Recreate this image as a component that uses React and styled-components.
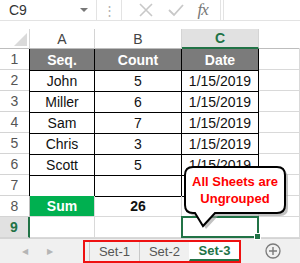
import React from "react";
import styled, { createGlobalStyle } from "styled-components";

const GlobalStyle = createGlobalStyle`
  html, body {
    margin: 0;
    padding: 0;
    background: #ffffff;
    font-family: "Liberation Sans", Arial, sans-serif;
  }
`;

const COLS = "30px 65px 87px 77px 41px";
const GREEN = "#217346";

const rows = [
  { name: "John", count: "5", date: "1/15/2019" },
  { name: "Miller", count: "6", date: "1/15/2019" },
  { name: "Sam", count: "7", date: "1/15/2019" },
  { name: "Chris", count: "3", date: "1/15/2019" },
  { name: "Scott", count: "5", date: "1/15/2019" },
];

const App = () => {
  return (
    <Page>
      <GlobalStyle />
      <FormulaBar>
        <NameBox>
          <span>C9</span>
          <Caret />
        </NameBox>
        <Dots>⋮</Dots>
        <ActionBox>
          <svg width="16" height="16" viewBox="0 0 16 16">
            <path d="M2 2 L14 14 M14 2 L2 14" stroke="#c8c8c8" strokeWidth="1.6" />
          </svg>
          <svg width="18" height="14" viewBox="0 0 18 14">
            <path d="M2 7 L7 12 L16 2" stroke="#c8c8c8" strokeWidth="1.8" fill="none" />
          </svg>
          <Fx>fx</Fx>
        </ActionBox>
        <FormulaInput />
      </FormulaBar>

      <Sheet>
        <Grid>
          <Corner>
            <svg width="13" height="13" viewBox="0 0 13 13">
              <path d="M13 0 L13 13 L0 13 Z" fill="#dadada" />
            </svg>
          </Corner>
          <ColHead>A</ColHead>
          <ColHead>B</ColHead>
          <ColHead $active>C</ColHead>
          <ColHead $last />

          <RowHead>1</RowHead>
          <Cell $head $b>Seq.</Cell>
          <Cell $head $b>Count</Cell>
          <Cell $head $b>Date</Cell>
          <Cell />

          {rows.map((r, i) => (
            <React.Fragment key={r.name}>
              <RowHead>{i + 2}</RowHead>
              <Cell $b>{r.name}</Cell>
              <Cell $b>{r.count}</Cell>
              <Cell $b>{r.date}</Cell>
              <Cell />
            </React.Fragment>
          ))}

          <RowHead>7</RowHead>
          <Cell $b />
          <Cell $b />
          <Cell $b />
          <Cell />

          <RowHead>8</RowHead>
          <Cell $sum>Sum</Cell>
          <Cell $bold>26</Cell>
          <Cell />
          <Cell />

          <RowHead $active>9</RowHead>
          <Cell />
          <Cell />
          <Selected>
            <Handle />
          </Selected>
          <Cell />
        </Grid>

        <Callout>
          <svg width="110" height="66" viewBox="0 0 110 66">
            <path
              d="M12 4 H96 Q104 4 104 12 V42 Q104 50 96 50 H34 L22 63 L14 50 H12 Q4 50 4 42 V12 Q4 4 12 4 Z"
              fill="#9a9a9a"
              transform="translate(3 3)"
              opacity="0.6"
            />
            <path
              d="M12 4 H96 Q104 4 104 12 V42 Q104 50 96 50 H34 L22 63 L14 50 H12 Q4 50 4 42 V12 Q4 4 12 4 Z"
              fill="#ffffff"
              stroke="#000000"
              strokeWidth="2"
            />
          </svg>
          <CalloutText>
            All Sheets are
            <br />
            Ungrouped
          </CalloutText>
        </Callout>
      </Sheet>

      <TabBar>
        <Nav>
          <Arrow>◀</Arrow>
          <Arrow>▶</Arrow>
        </Nav>
        <TabGroup>
          <Tab>Set-1</Tab>
          <Tab>Set-2</Tab>
          <Tab $active>Set-3</Tab>
        </TabGroup>
        <AddSheet>
          <svg width="16" height="16" viewBox="0 0 16 16">
            <circle cx="8" cy="8" r="7" fill="none" stroke="#7a7a7a" strokeWidth="1.3" />
            <path d="M8 4 V12 M4 8 H12" stroke="#7a7a7a" strokeWidth="1.4" />
          </svg>
        </AddSheet>
      </TabBar>
    </Page>
  );
};

const Page = styled.div`
  width: 300px;
  height: 263px;
  overflow: hidden;
  display: flex;
  flex-direction: column;
  background: #ffffff;
`;

const FormulaBar = styled.div`
  height: 22px;
  display: flex;
  align-items: stretch;
  margin-bottom: 8px;
  border-bottom: 1px solid #e3e3e3;
  box-sizing: border-box;
`;

const NameBox = styled.div`
  width: 97px;
  box-sizing: border-box;
  border-right: 1px solid #e3e3e3;
  display: flex;
  align-items: center;
  justify-content: space-between;
  padding: 0 8px 0 9px;
  font-size: 14px;
  color: #333;
`;

const Caret = styled.div`
  width: 0;
  height: 0;
  border-left: 4px solid transparent;
  border-right: 4px solid transparent;
  border-top: 4px solid #777;
`;

const Dots = styled.div`
  width: 24px;
  display: flex;
  align-items: center;
  justify-content: center;
  color: #b0b0b0;
  font-size: 13px;
`;

const ActionBox = styled.div`
  width: 100px;
  box-sizing: border-box;
  border-left: 1px solid #e3e3e3;
  border-right: 1px solid #e3e3e3;
  display: flex;
  align-items: center;
  justify-content: space-around;
  padding: 0 6px 0 10px;
`;

const Fx = styled.span`
  font-family: "Liberation Serif", serif;
  font-style: italic;
  font-size: 17px;
  color: #777;
  letter-spacing: -1px;
`;

const FormulaInput = styled.div`
  flex: 1;
  margin-left: 2px;
  border-left: 1px solid #e3e3e3;
`;

const Sheet = styled.div`
  position: relative;
  flex: 1;
`;

const Grid = styled.div`
  display: grid;
  grid-template-columns: ${COLS};
  grid-template-rows: 20px repeat(9, 21px);
`;

const Corner = styled.div`
  display: flex;
  align-items: flex-end;
  justify-content: flex-end;
  padding: 0 2px 2px 0;
  border-right: 1px solid #d4d4d4;
  border-bottom: 1px solid #bdbdbd;
  box-sizing: border-box;
`;

const ColHead = styled.div`
  display: flex;
  align-items: center;
  justify-content: center;
  box-sizing: border-box;
  font-size: 14px;
  color: ${(p) => (p.$active ? GREEN : "#444")};
  font-weight: ${(p) => (p.$active ? "bold" : "normal")};
  background: ${(p) => (p.$active ? "#e1e1e1" : "#ffffff")};
  border-right: 1px solid ${(p) => (p.$last ? "transparent" : "#d4d4d4")};
  border-bottom: ${(p) => (p.$active ? `2px solid ${GREEN}` : "1px solid #bdbdbd")};
`;

const RowHead = styled.div`
  display: flex;
  align-items: center;
  justify-content: center;
  box-sizing: border-box;
  font-size: 14px;
  color: ${(p) => (p.$active ? GREEN : "#555")};
  font-weight: ${(p) => (p.$active ? "bold" : "normal")};
  background: ${(p) => (p.$active ? "#e1e1e1" : "#ffffff")};
  border-bottom: 1px solid #d4d4d4;
  border-right: ${(p) => (p.$active ? `2px solid ${GREEN}` : "1px solid #bdbdbd")};
`;

const Cell = styled.div`
  display: flex;
  align-items: center;
  justify-content: center;
  box-sizing: border-box;
  margin: ${(p) => (p.$b ? "0 0 -1px -1px" : "0")};
  font-size: 14px;
  white-space: nowrap;
  color: ${(p) => (p.$head || p.$sum ? "#ffffff" : "#111")};
  font-weight: ${(p) => (p.$head || p.$sum || p.$bold ? "bold" : "normal")};
  background: ${(p) => (p.$head ? "#7b7b7b" : p.$sum ? "#00b050" : "transparent")};
  border-right: 1px solid ${(p) => (p.$b ? "#000" : "#d9d9d9")};
  border-bottom: 1px solid ${(p) => (p.$b ? "#000" : "#d9d9d9")};
  border-left: ${(p) => (p.$b ? "1px solid #000" : "none")};
`;

const Selected = styled.div`
  position: relative;
  box-sizing: border-box;
  border: 2px solid ${GREEN};
  margin: -1px 0 0 -1px;
`;

const Handle = styled.div`
  position: absolute;
  right: -4px;
  bottom: -4px;
  width: 5px;
  height: 5px;
  background: ${GREEN};
  border: 1px solid #fff;
`;

const Callout = styled.div`
  position: absolute;
  left: 181px;
  top: 134px;
  width: 110px;
  height: 66px;
`;

const CalloutText = styled.div`
  position: absolute;
  left: 4px;
  top: 4px;
  width: 100px;
  height: 46px;
  display: flex;
  align-items: center;
  justify-content: center;
  text-align: center;
  color: #ff0000;
  font-weight: bold;
  font-size: 13px;
  line-height: 17px;
`;

const TabBar = styled.div`
  height: 26px;
  box-sizing: border-box;
  background: #f0f0f0;
  border-top: 1px solid #d4d4d4;
  display: flex;
  align-items: stretch;
`;

const Nav = styled.div`
  width: 83px;
  display: flex;
  align-items: center;
  gap: 19px;
  padding-left: 22px;
  box-sizing: border-box;
`;

const Arrow = styled.span`
  font-size: 8px;
  color: #b5b5b5;
`;

const TabGroup = styled.div`
  display: flex;
  align-items: stretch;
  border: 2px solid #ee1111;
  margin-top: 1px;
  padding-left: 4px;
`;

const Tab = styled.div`
  width: 50px;
  display: flex;
  align-items: center;
  justify-content: center;
  font-size: 13px;
  box-sizing: border-box;
  color: ${(p) => (p.$active ? GREEN : "#555")};
  font-weight: ${(p) => (p.$active ? "bold" : "normal")};
  background: ${(p) => (p.$active ? "#ffffff" : "transparent")};
  border-left: 1px solid ${(p) => (p.$active ? "transparent" : "#c8c8c8")};
  border-bottom: ${(p) => (p.$active ? `2px solid ${GREEN}` : "none")};
`;

const AddSheet = styled.div`
  flex: 1;
  display: flex;
  align-items: center;
  justify-content: center;
  padding-left: 4px;
`;

export default App;
